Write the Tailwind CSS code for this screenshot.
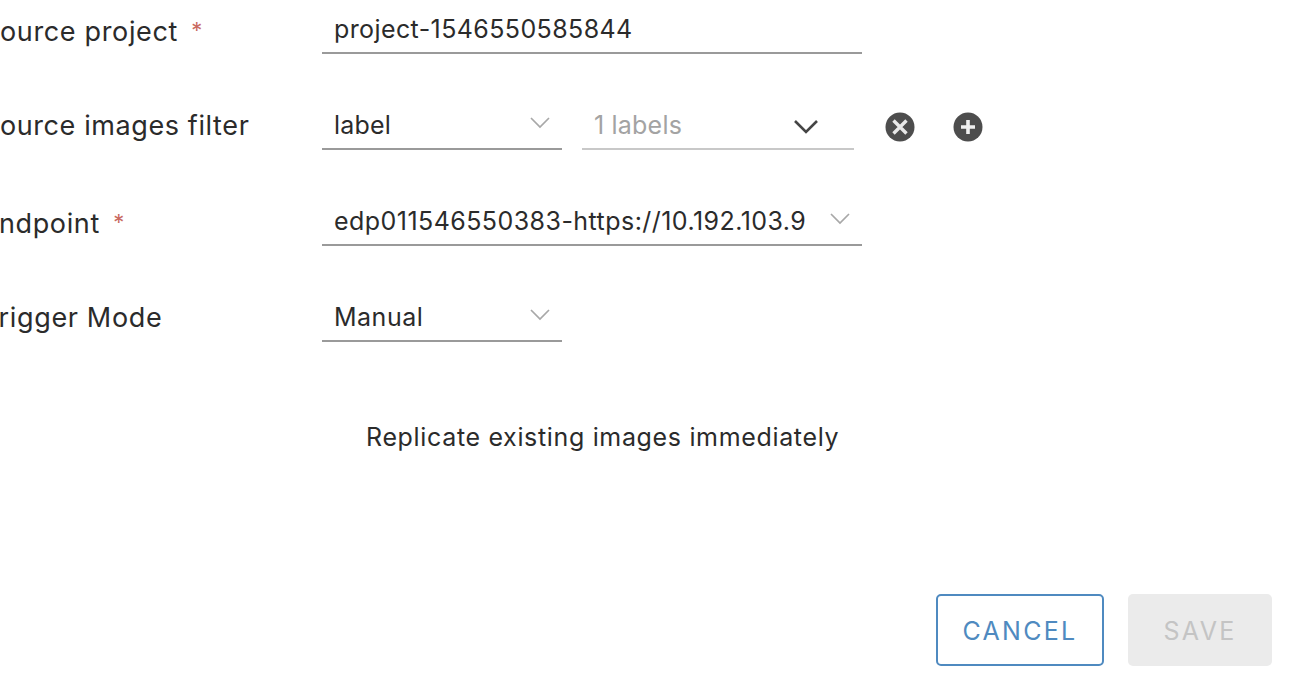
<html>
  <head>
    <script src="https://cdn.jsdelivr.net/npm/@tailwindcss/browser@4"></script>
  </head>
  <body class='bg-white overflow-hidden text-[#2b2b2b] font-["Inter",sans-serif] text-[25px] tracking-[0.2px]'>
    <div class='w-[1310px] h-[696px] overflow-hidden relative'>

      <div class='flex flex-col'>
        <!-- source project -->
        <div class='flex h-[54px] items-end'>
          <div class='w-[322px] -ml-[18px] mr-[18px] h-[42px] flex-none text-[27px] leading-[36px] tracking-[0.65px]'>Source project <span class='text-[#c9695f] text-[22px] align-[3px] ml-[5px]'>*</span></div>
          <div class='w-[540px] h-[54px] border-b-2 border-[#9a9a9a] pl-3 pt-[11px] tracking-[0.4px]'>project-1546550585844</div>
        </div>

        <!-- source images filter -->
        <div class='flex h-[96px] items-end'>
          <div class='w-[322px] -ml-[18px] mr-[18px] h-[42px] flex-none text-[27px] leading-[36px] tracking-[0.6px]'>Source images filter</div>
          <div class='w-[240px] h-[54px] border-b-2 border-[#9a9a9a] pl-3 pt-[11px] flex justify-between'>
            label
            <svg class='w-[20px] h-[12px] mt-[10px] mr-[12px]' viewBox='0 0 20 12' fill='none' stroke='#a8a8a8' stroke-width='1.7'><path d='M1 1l9 9 9-9'/></svg>
          </div>
          <div class='w-[272px] h-[54px] ml-[20px] border-b-2 border-[#c8c8c8] pl-3 pt-[11px] flex justify-between text-[#a3a3a3]'>
            1 labels
            <svg class='w-[24px] h-[14px] mt-[13px] mr-[36px]' viewBox='0 0 24 14' fill='none' stroke='#454545' stroke-width='2.6'><path d='M1 1l11 11 11-11'/></svg>
          </div>
          <div class='flex items-center gap-[38px] ml-[31px] h-[54px] pt-[8px]'>
            <svg class='w-[30px] h-[30px]' viewBox='0 0 30 30'><circle cx='15' cy='15' r='14.5' fill='#4d4d4d'/><path d='M8.5 8.5l13 13M21.5 8.5l-13 13' stroke='#e8e8e8' stroke-width='3.4'/></svg>
            <svg class='w-[30px] h-[30px]' viewBox='0 0 30 30'><circle cx='15' cy='15' r='14.5' fill='#4d4d4d'/><path d='M8 15h14M15 8v14' stroke='#f0f0f0' stroke-width='3.6'/></svg>
          </div>
        </div>

        <!-- endpoint -->
        <div class='flex h-[96px] items-end'>
          <div class='w-[322px] -ml-[18px] mr-[18px] h-[42px] flex-none text-[27px] leading-[36px] tracking-[0.65px]'>Endpoint <span class='text-[#c9695f] text-[22px] align-[3px] ml-[5px]'>*</span></div>
          <div class='w-[540px] h-[54px] border-b-2 border-[#9a9a9a] pl-3 pt-[11px] flex justify-between tracking-[0.45px]'>
            edp011546550383-https://10.192.103.9
            <svg class='w-[20px] h-[12px] mt-[10px] mr-[12px]' viewBox='0 0 20 12' fill='none' stroke='#a8a8a8' stroke-width='1.7'><path d='M1 1l9 9 9-9'/></svg>
          </div>
        </div>

        <!-- trigger mode -->
        <div class='flex h-[96px] items-end'>
          <div class='w-[322px] -ml-[18px] mr-[18px] h-[42px] flex-none text-[27px] leading-[36px] tracking-[0.65px]'>Trigger Mode</div>
          <div class='w-[240px] h-[54px] border-b-2 border-[#9a9a9a] pl-3 pt-[11px] flex justify-between tracking-[0.5px]'>
            Manual
            <svg class='w-[20px] h-[12px] mt-[10px] mr-[12px]' viewBox='0 0 20 12' fill='none' stroke='#a8a8a8' stroke-width='1.7'><path d='M1 1l9 9 9-9'/></svg>
          </div>
        </div>
      </div>

      <div class='mt-[77px] ml-[366px] tracking-[0.66px]'>Replicate existing images immediately</div>

      <div class='flex justify-end gap-6 pr-[38px] mt-[137px] text-[25px] tracking-[2.3px]'>
        <button class='w-[168px] h-[72px] rounded-[5px] border-2 border-[#4f8ac0] text-[#4f8ac0] pt-[5px]'>CANCEL</button>
        <button class='w-[144px] h-[72px] rounded-[5px] bg-[#ebebeb] text-[#c4c4c4] pt-[5px]'>SAVE</button>
      </div>
    </div>
  </body>
</html>
